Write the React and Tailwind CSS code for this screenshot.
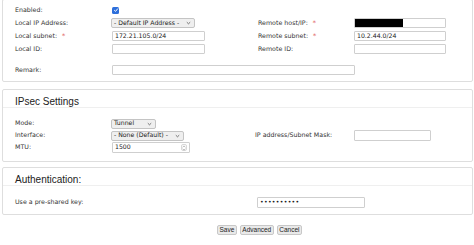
import React from 'react'

const label = 'text-[6.3px] text-[#333] leading-none whitespace-nowrap'
const ctrlFont = { fontFamily: '"DejaVu Sans", Verdana, sans-serif' }

function Req() {
  return <span className="text-[#e06060] ml-[5px]">*</span>
}

function Field({ w, value, children, className = '' }) {
  return (
    <div
      className={`relative h-[10.5px] bg-white border border-[#cfcfcf] rounded-[1px] flex items-center pl-[2px] text-[6.2px] text-[#222] leading-none overflow-hidden ${className}`}
      style={{ width: w }}
    >
      {children}
      {value}
    </div>
  )
}

function Select({ w, value }) {
  return (
    <div
      className="h-[10px] bg-[#efefef] border border-[#c4c4c4] rounded-[2px] flex items-center justify-between pl-[2px] pr-[3px] text-[6.2px] text-[#222] leading-none"
      style={{ width: w }}
    >
      <span>{value}</span>
      <svg width="5" height="4" viewBox="0 0 5 4">
        <path d="M0.8 1.2 L2.5 2.8 L4.2 1.2" fill="none" stroke="#555" strokeWidth="0.8" />
      </svg>
    </div>
  )
}

function Row({ children, h = 'h-[13px]' }) {
  return <div className={`flex items-center ${h}`}>{children}</div>
}

function Panel({ title, children, className = '' }) {
  return (
    <div className={`ml-[2px] mr-[1px] border border-[#dedede] rounded-[2px] bg-white ${className}`}>
      {title && (
        <div className="h-[18px] border-b border-[#efefef] pl-[12px] pt-[6px]">
          <div
            className="text-[10px] leading-[12px] text-[#222]"
            style={{ fontFamily: '"Liberation Sans", Arial, sans-serif' }}
          >
            {title}
          </div>
        </div>
      )}
      {children}
    </div>
  )
}

export default function App() {
  return (
    <div className="w-[474px] h-[245px] bg-white overflow-hidden" style={ctrlFont}>
      {/* general */}
      <Panel className="-mt-[1px] pt-[3.5px] pb-[4px]">
        <div className="pl-[12px]">
          <Row>
            <div className={`${label} w-[97px]`}>Enabled:</div>
            <div className="w-[7px] h-[7px] rounded-[1.5px] bg-[#2d6fdb] flex items-center justify-center">
              <svg width="6" height="6" viewBox="0 0 6 6">
                <path d="M1.2 3.1 L2.5 4.4 L4.9 1.5" fill="none" stroke="#fff" strokeWidth="1" />
              </svg>
            </div>
          </Row>
          <Row>
            <div className={`${label} w-[96px]`}>Local IP Address:</div>
            <div className="w-[147px]">
              <Select w="84px" value="- Default IP Address -" />
            </div>
            <div className={`${label} w-[96px]`}>Remote host/IP:<Req /></div>
            <Field w="92px">
              <div className="absolute left-0 top-0 bottom-0 w-[48px] bg-black" />
            </Field>
          </Row>
          <Row>
            <div className={`${label} w-[97px]`}>Local subnet:<Req /></div>
            <div className="w-[146px]">
              <Field w="93px" value="172.21.105.0/24" />
            </div>
            <div className={`${label} w-[96px]`}>Remote subnet:<Req /></div>
            <Field w="92px" value="10.2.44.0/24" />
          </Row>
          <Row>
            <div className={`${label} w-[97px]`}>Local ID:</div>
            <div className="w-[146px]">
              <Field w="93px" />
            </div>
            <div className={`${label} w-[96px]`}>Remote ID:</div>
            <Field w="92px" />
          </Row>
          <div className="h-[8px]" />
          <Row>
            <div className={`${label} w-[97px]`}>Remark:</div>
            <Field w="243px" />
          </Row>
        </div>
      </Panel>

      {/* ipsec */}
      <Panel title="IPsec Settings" className="mt-[7px]">
        <div className="pl-[12px] pt-[10px] pb-[7px]">
          <Row h="h-[12px]">
            <div className={`${label} w-[96px]`}>Mode:</div>
            <Select w="45px" value="Tunnel" />
          </Row>
          <Row h="h-[12px]">
            <div className={`${label} w-[96px]`}>Interface:</div>
            <div className="w-[144px]">
              <Select w="73px" value="- None (Default) -" />
            </div>
            <div className={`${label} w-[99px]`}>IP address/Subnet Mask:</div>
            <Field w="77px" />
          </Row>
          <Row h="h-[12px]">
            <div className={`${label} w-[97px]`}>MTU:</div>
            <Field w="78px" value="1500" className="h-[11.5px]">
              <div className="absolute right-[2px] top-[1.5px] w-[6px] h-[7px] border border-[#d8d8d8] rounded-[2px] flex items-center justify-center">
                <svg width="4" height="6" viewBox="0 0 4 6">
                  <path d="M0.6 2.2 L2 0.9 L3.4 2.2 M0.6 3.8 L2 5.1 L3.4 3.8" fill="none" stroke="#888" strokeWidth="0.6" />
                </svg>
              </div>
            </Field>
          </Row>
        </div>
      </Panel>

      {/* auth */}
      <Panel title="Authentication:" className="mt-[5px]">
        <div className="pl-[12px] pt-[11px] pb-[6px]">
          <Row h="h-[11.5px]">
            <div className={`${label} w-[242px]`}>Use a pre-shared key:</div>
            <Field w="108px" value="••••••••••" className="tracking-[0.3px]" />
          </Row>
        </div>
      </Panel>

      <div
        className="flex gap-[3px] pl-[217px] mt-[10px]"
        style={{ fontFamily: '"Liberation Sans", Arial, sans-serif' }}
      >
        {['Save', 'Advanced', 'Cancel'].map(b => (
          <button
            key={b}
            className="h-[10px] px-[1.5px] bg-[#e9e9e9] border border-[#c8c8c8] rounded-[2px] text-[6.5px] leading-none text-[#222]"
          >
            {b}
          </button>
        ))}
      </div>
    </div>
  )
}
